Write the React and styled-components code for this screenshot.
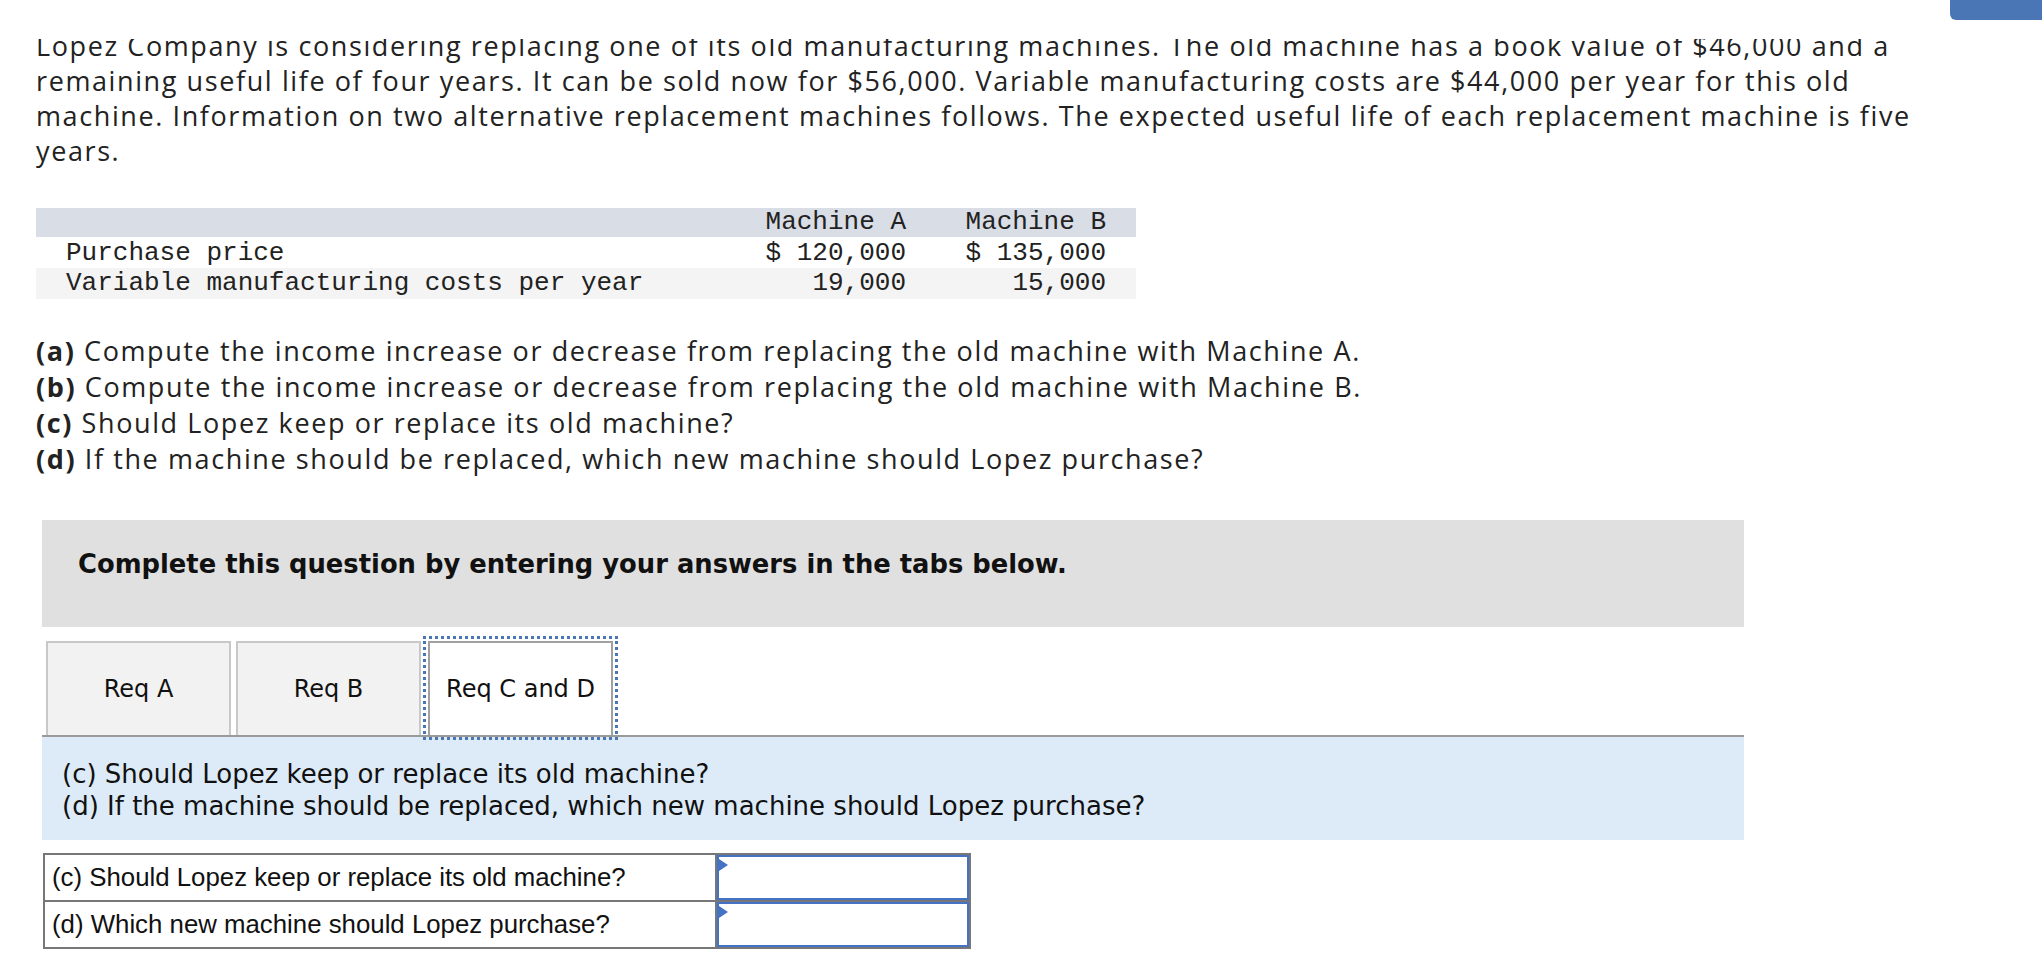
import React from "react";
import styled, { createGlobalStyle } from "styled-components";

const GlobalStyle = createGlobalStyle`
  html, body { margin: 0; padding: 0; background: #fff; }
  body { font-family: "Open Sans", sans-serif; color: #222; }
`;

const TopMask = styled.div`
  position: fixed; top: 0; left: 0; right: 0; height: 39px; background: #fff; z-index: 5;
`;
const CornerButton = styled.div`
  position: absolute; top: 0; right: 0; width: 92px; height: 20px;
  background: #4a76b6; border-bottom-left-radius: 6px;
`;

const Page = styled.div`
  padding: 0 0 0 36px;
`;

const Intro = styled.p`
  margin: 28px 0 0;
  width: 1875px;
  font-family: "Open Sans", sans-serif;
  font-size: 27px;
  letter-spacing: 1.6px;
  line-height: 35px;
  color: #222;
`;

const DataTable = styled.table`
  margin-top: 40px;
  width: 1100px;
  border-collapse: collapse;
  font-family: "Liberation Mono", monospace;
  font-size: 26px;
  color: #222;
`;
const DataRow = styled.tr`
  background: ${p => p.$bg || "#fff"};
  height: ${p => p.$h || 30}px;
`;
const DataCell = styled.td`
  padding: 0;
  padding-left: ${p => (p.$label ? 30 : 0)}px;
  padding-right: ${p => p.$pr || 0}px;
  padding-top: ${p => p.$pt || 0}px;
  text-align: ${p => (p.$label ? "left" : "right")};
  width: ${p => p.$w}px;
  white-space: pre;
  line-height: 29px;
`;

const Questions = styled.div`
  margin-top: 34px;
  font-family: "Open Sans", sans-serif;
  font-size: 27px;
  letter-spacing: 1.6px;
  line-height: 36px;
  color: #222;
`;
const QLine = styled.div``;
const QTag = styled.b`font-weight: 700;`;

const Panel = styled.div`
  margin: 43px 0 0 42px;
  width: 1702px;
`;
const Notice = styled.div`
  height: 107px;
  box-sizing: border-box;
  background: #e0e0e0;
  padding: 29px 36px 0;
  font-family: "DejaVu Sans", Verdana, sans-serif;
  font-weight: 700;
  font-size: 25.8px;
  line-height: 30px;
  color: #111;
`;
const TabBar = styled.div`
  margin-top: 14px;
  display: flex;
  gap: 5px;
  padding-left: 4px;
  border-bottom: 2px solid #9a9a9a;
`;
const Tab = styled.div`
  width: 185px;
  height: 94px;
  box-sizing: border-box;
  display: flex;
  align-items: center;
  justify-content: center;
  font-family: "DejaVu Sans", Verdana, sans-serif;
  font-size: 24px;
  color: #111;
  background: ${p => (p.$active ? "#fff" : "#f2f2f2")};
  border: 2px solid ${p => (p.$active ? "#a0a0a0" : "#c8c8c8")};
  border-bottom: none;
  outline: ${p => (p.$active ? "3px dotted #4a76b6" : "none")};
  outline-offset: 2px;
  margin-left: ${p => (p.$active ? 2 : 0)}px;
`;
const InfoBox = styled.div`
  background: #ddebf8;
  height: 103px;
  box-sizing: border-box;
  padding: 21px 20px 0;
  font-family: "DejaVu Sans", Verdana, sans-serif;
  font-size: 26px;
  line-height: 32px;
  color: #111;
`;

const AnswerTable = styled.table`
  margin: 13px 0 0 43px;
  border-collapse: collapse;
  font-family: "Liberation Sans", Arial, sans-serif;
  font-size: 25.8px;
  color: #111;
`;
const AnswerRow = styled.tr``;
const LabelCell = styled.td`
  border: 2px solid #777;
  width: 663px;
  padding: 0 0 0 7px;
`;
const InputCell = styled.td`
  border: 2px solid #777;
  width: 252px;
  padding: 0;
`;
const InputBox = styled.div`
  position: relative;
  height: 45px;
  box-sizing: border-box;
  border: 2px solid #4472c4;
  &::before {
    content: "";
    position: absolute;
    left: 0; top: 2px;
    border-top: 6px solid transparent;
    border-bottom: 6px solid transparent;
    border-left: 9px solid #4472c4;
  }
`;

export default function App() {
  return (
    <>
      <GlobalStyle />
      <TopMask><CornerButton /></TopMask>
      <Page>
        <Intro>
          Lopez Company is considering replacing one of its old manufacturing machines. The old machine has a book value of $46,000 and a remaining useful life of four years. It can be sold now for $56,000. Variable manufacturing costs are $44,000 per year for this old machine. Information on two alternative replacement machines follows. The expected useful life of each replacement machine is five years.
        </Intro>
        <DataTable>
          <tbody>
            <DataRow $bg="#d9dde6" $h={29}>
              <DataCell $label $w={644}></DataCell>
              <DataCell $w={196}>Machine A</DataCell>
              <DataCell $w={200} $pr={30}>Machine B</DataCell>
            </DataRow>
            <DataRow>
              <DataCell $label $pt={2}>Purchase price</DataCell>
              <DataCell $pt={2}>$ 120,000</DataCell>
              <DataCell $pr={30} $pt={2}>$ 135,000</DataCell>
            </DataRow>
            <DataRow $bg="#f4f4f4" $h={31}>
              <DataCell $label>Variable manufacturing costs per year</DataCell>
              <DataCell>19,000</DataCell>
              <DataCell $pr={30}>15,000</DataCell>
            </DataRow>
          </tbody>
        </DataTable>
        <Questions>
          <QLine><QTag>(a)</QTag> Compute the income increase or decrease from replacing the old machine with Machine A.</QLine>
          <QLine><QTag>(b)</QTag> Compute the income increase or decrease from replacing the old machine with Machine B.</QLine>
          <QLine><QTag>(c)</QTag> Should Lopez keep or replace its old machine?</QLine>
          <QLine><QTag>(d)</QTag> If the machine should be replaced, which new machine should Lopez purchase?</QLine>
        </Questions>
      </Page>
      <Panel>
        <Notice>Complete this question by entering your answers in the tabs below.</Notice>
        <TabBar>
          <Tab>Req A</Tab>
          <Tab>Req B</Tab>
          <Tab $active>Req C and D</Tab>
        </TabBar>
        <InfoBox>
          <div>(c) Should Lopez keep or replace its old machine?</div>
          <div>(d) If the machine should be replaced, which new machine should Lopez purchase?</div>
        </InfoBox>
      </Panel>
      <AnswerTable>
        <tbody>
          <AnswerRow>
            <LabelCell>(c) Should Lopez keep or replace its old machine?</LabelCell>
            <InputCell><InputBox /></InputCell>
          </AnswerRow>
          <AnswerRow>
            <LabelCell>(d) Which new machine should Lopez purchase?</LabelCell>
            <InputCell><InputBox /></InputCell>
          </AnswerRow>
        </tbody>
      </AnswerTable>
    </>
  );
}
